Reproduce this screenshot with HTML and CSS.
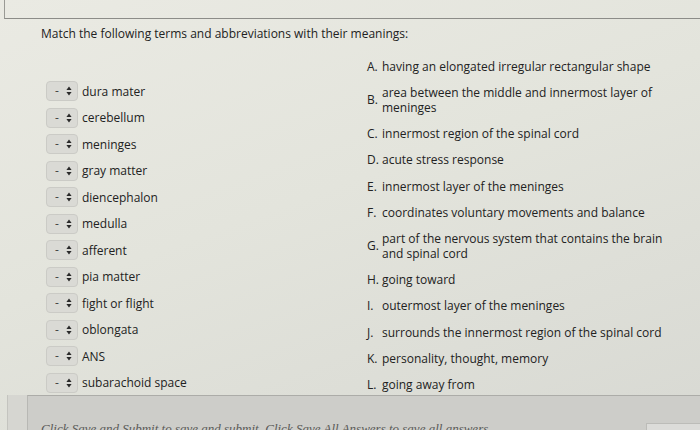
FILE: index.html
```html
<!DOCTYPE html>
<html lang="en">
<head>
<meta charset="utf-8">
<title>Matching question</title>
<link rel="stylesheet" href="styles.css">
</head>
<body>
<div class="page">
  <div class="prev-box"></div>

  <section class="question">
    <p class="prompt">Match the following terms and abbreviations with their meanings:</p>

    <div class="match">
      <ul class="terms">
        <li class="term"><span class="sel"><span class="dash">-</span><svg class="arrows" viewBox="0 0 6 10" width="6" height="10"><path d="M3 0.5 L5.6 4 H0.4 Z M3 9.5 L5.6 6 H0.4 Z"/></svg></span><span class="label">dura mater</span></li>
        <li class="term"><span class="sel"><span class="dash">-</span><svg class="arrows" viewBox="0 0 6 10" width="6" height="10"><path d="M3 0.5 L5.6 4 H0.4 Z M3 9.5 L5.6 6 H0.4 Z"/></svg></span><span class="label">cerebellum</span></li>
        <li class="term"><span class="sel"><span class="dash">-</span><svg class="arrows" viewBox="0 0 6 10" width="6" height="10"><path d="M3 0.5 L5.6 4 H0.4 Z M3 9.5 L5.6 6 H0.4 Z"/></svg></span><span class="label">meninges</span></li>
        <li class="term"><span class="sel"><span class="dash">-</span><svg class="arrows" viewBox="0 0 6 10" width="6" height="10"><path d="M3 0.5 L5.6 4 H0.4 Z M3 9.5 L5.6 6 H0.4 Z"/></svg></span><span class="label">gray matter</span></li>
        <li class="term"><span class="sel"><span class="dash">-</span><svg class="arrows" viewBox="0 0 6 10" width="6" height="10"><path d="M3 0.5 L5.6 4 H0.4 Z M3 9.5 L5.6 6 H0.4 Z"/></svg></span><span class="label">diencephalon</span></li>
        <li class="term"><span class="sel"><span class="dash">-</span><svg class="arrows" viewBox="0 0 6 10" width="6" height="10"><path d="M3 0.5 L5.6 4 H0.4 Z M3 9.5 L5.6 6 H0.4 Z"/></svg></span><span class="label">medulla</span></li>
        <li class="term"><span class="sel"><span class="dash">-</span><svg class="arrows" viewBox="0 0 6 10" width="6" height="10"><path d="M3 0.5 L5.6 4 H0.4 Z M3 9.5 L5.6 6 H0.4 Z"/></svg></span><span class="label">afferent</span></li>
        <li class="term"><span class="sel"><span class="dash">-</span><svg class="arrows" viewBox="0 0 6 10" width="6" height="10"><path d="M3 0.5 L5.6 4 H0.4 Z M3 9.5 L5.6 6 H0.4 Z"/></svg></span><span class="label">pia matter</span></li>
        <li class="term"><span class="sel"><span class="dash">-</span><svg class="arrows" viewBox="0 0 6 10" width="6" height="10"><path d="M3 0.5 L5.6 4 H0.4 Z M3 9.5 L5.6 6 H0.4 Z"/></svg></span><span class="label">fight or flight</span></li>
        <li class="term"><span class="sel"><span class="dash">-</span><svg class="arrows" viewBox="0 0 6 10" width="6" height="10"><path d="M3 0.5 L5.6 4 H0.4 Z M3 9.5 L5.6 6 H0.4 Z"/></svg></span><span class="label">oblongata</span></li>
        <li class="term"><span class="sel"><span class="dash">-</span><svg class="arrows" viewBox="0 0 6 10" width="6" height="10"><path d="M3 0.5 L5.6 4 H0.4 Z M3 9.5 L5.6 6 H0.4 Z"/></svg></span><span class="label">ANS</span></li>
        <li class="term"><span class="sel"><span class="dash">-</span><svg class="arrows" viewBox="0 0 6 10" width="6" height="10"><path d="M3 0.5 L5.6 4 H0.4 Z M3 9.5 L5.6 6 H0.4 Z"/></svg></span><span class="label">subarachoid space</span></li>
      </ul>

      <ol class="options">
        <li class="opt"><span class="letter">A.</span><span class="text">having an elongated irregular rectangular shape</span></li>
        <li class="opt two"><span class="letter">B.</span><span class="text">area between the middle and innermost layer of<br>meninges</span></li>
        <li class="opt"><span class="letter">C.</span><span class="text">innermost region of the spinal cord</span></li>
        <li class="opt"><span class="letter">D.</span><span class="text">acute stress response</span></li>
        <li class="opt"><span class="letter">E.</span><span class="text">innermost layer of the meninges</span></li>
        <li class="opt"><span class="letter">F.</span><span class="text">coordinates voluntary movements and balance</span></li>
        <li class="opt two"><span class="letter">G.</span><span class="text">part of the nervous system that contains the brain<br>and spinal cord</span></li>
        <li class="opt"><span class="letter">H.</span><span class="text">going toward</span></li>
        <li class="opt"><span class="letter">I.</span><span class="text">outermost layer of the meninges</span></li>
        <li class="opt"><span class="letter">J.</span><span class="text">surrounds the innermost region of the spinal cord</span></li>
        <li class="opt"><span class="letter">K.</span><span class="text">personality, thought, memory</span></li>
        <li class="opt"><span class="letter">L.</span><span class="text">going away from</span></li>
      </ol>
    </div>
  </section>

  <footer class="save-bar">
    <div class="save-panel">
      <p class="save-note">Click Save and Submit to save and submit. Click Save All Answers to save all answers.</p>
      <span class="save-btn"></span>
    </div>
  </footer>
</div>
</body>
</html>
```

FILE: styles.css
```css
html, body {
  margin: 0;
  padding: 0;
}

body {
  width: 700px;
  height: 430px;
  overflow: hidden;
  font-family: "Open Sans", "Noto Sans", sans-serif;
  color: #222;
  background: linear-gradient(160deg, #eaeae3 0%, #e3e4dc 45%, #d8d9d3 100%);
}

.page {
  position: relative;
  height: 430px;
}

/* bottom edge of the previous question's box */
.prev-box {
  height: 18px;
  margin-left: 4px;
  border-left: 1px solid #9a9a95;
  border-bottom: 1px solid #8c8c88;
}

.question {
  padding-left: 41px;
}

.prompt {
  margin: 6px 0 0;
  font-size: 12px;
  line-height: 18px;
}

.match {
  display: grid;
  grid-template-columns: 321px 1fr;
  margin: 10px 0 0 5px;
  height: 340px;
}

/* left column: dropdown + term */
.terms {
  list-style: none;
  margin: 0;
  padding: 25px 0 0;
}

.term {
  display: flex;
  align-items: center;
  height: 26.5px;
  font-size: 12px;
}

.sel {
  box-sizing: border-box;
  display: flex;
  align-items: center;
  justify-content: space-between;
  width: 32px;
  height: 20px;
  padding: 0 5px 0 8px;
  margin-right: 4px;
  border: 1px solid #cbcbc6;
  border-radius: 4px;
  background: #dadad5;
}

.dash {
  font-size: 12px;
  color: #444;
  line-height: 1;
}

.arrows {
  fill: #2a2a2a;
}

.label {
  white-space: nowrap;
}

/* right column: lettered meanings */
.options {
  list-style: none;
  margin: 0;
  padding: 0;
}

.opt {
  display: flex;
  align-items: center;
  min-height: 26.3px;
  font-size: 12px;
  white-space: nowrap;
}

.opt.two {
  min-height: 41px;
  line-height: 15px;
}

.letter {
  flex: 0 0 15px;
}

/* grey save panel along the bottom */
.save-bar {
  position: absolute;
  left: 0;
  right: 0;
  top: 395px;
  bottom: 0;
  padding-left: 7px;
  border-left: 1px solid #c4c4bf;
  margin-left: 7px;
  background: #d6d6d1;
}

.save-panel {
  position: relative;
  height: 100%;
  margin-left: 12px;
  border-top: 1px solid #acaca8;
  border-left: 1px solid #b8b8b4;
  background: #cdcdc9;
}

.save-note {
  margin: 0;
  padding: 25px 0 0 13px;
  font-family: "Liberation Serif", "DejaVu Serif", serif;
  font-style: italic;
  font-size: 13px;
  line-height: 15px;
  color: #5a5a58;
  white-space: nowrap;
}

.save-btn {
  position: absolute;
  left: 618px;
  top: 27px;
  width: 70px;
  height: 20px;
  border: 1px solid #bcbcb8;
  background: #dcdcd9;
}
```
